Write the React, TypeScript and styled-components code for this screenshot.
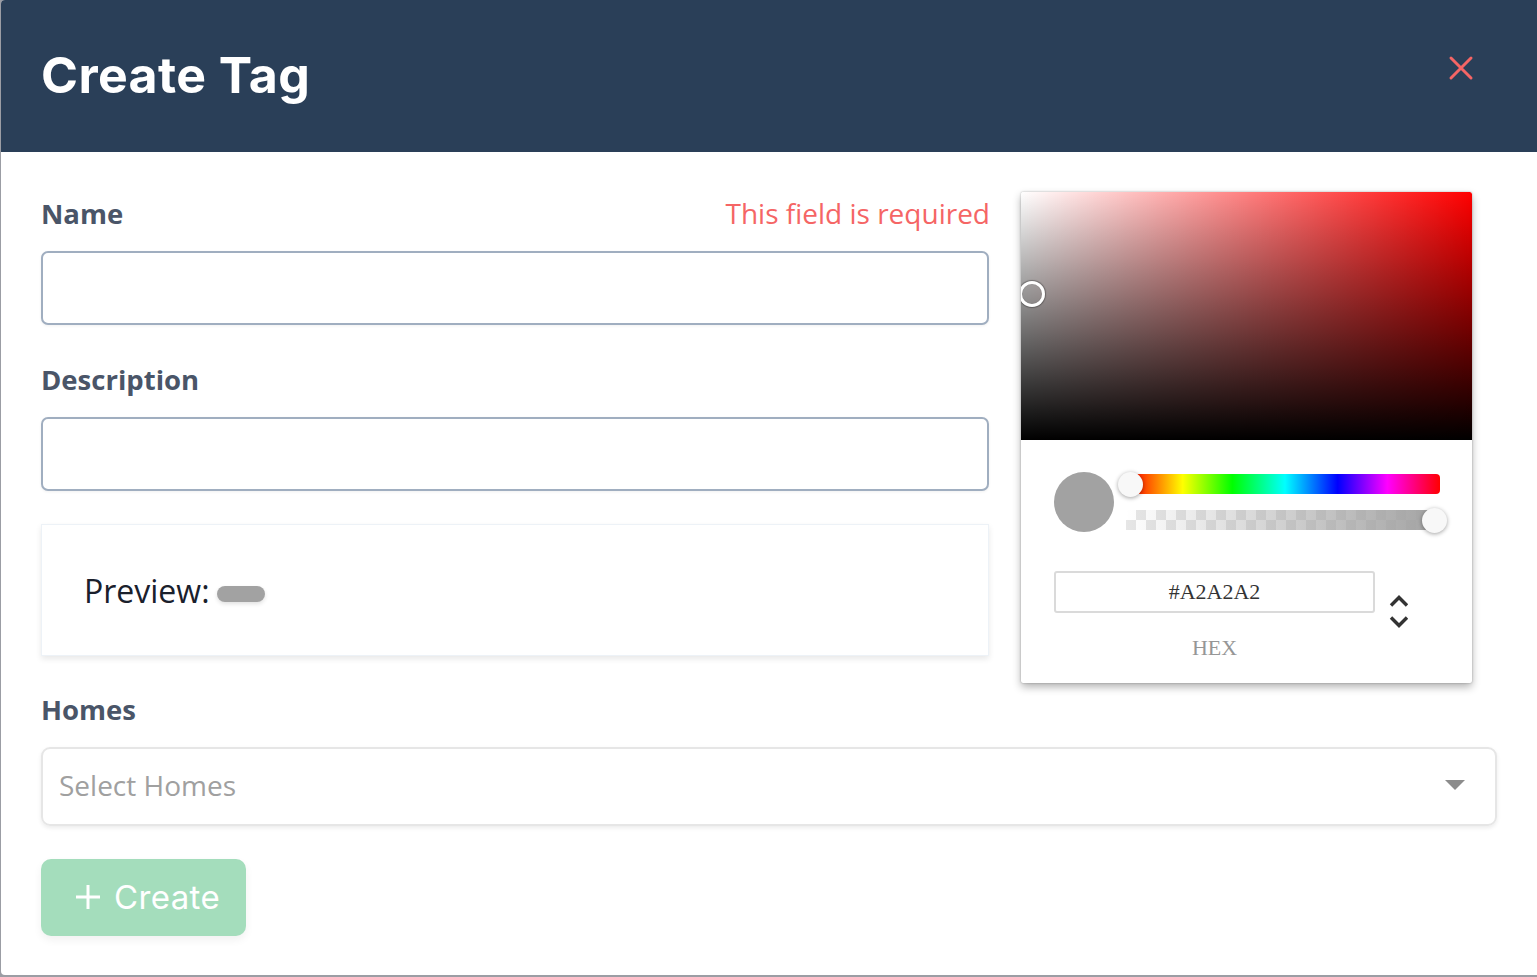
import * as React from "react";
import styled, { createGlobalStyle } from "styled-components";

const GlobalStyle = createGlobalStyle`
  html, body {
    margin: 0;
    padding: 0;
    background: #9b9da4;
  }
  * {
    box-sizing: border-box;
  }
`;

const Page = styled.div`
  width: 1537px;
  height: 977px;
  padding: 0 0 2px 1px;
  overflow: hidden;
`;

const Modal = styled.div`
  height: 975px;
  background: #fff;
  border-radius: 4px 0 0 4px;
  overflow: hidden;
  display: flex;
  flex-direction: column;
`;

const Header = styled.header`
  height: 152px;
  flex: none;
  background: #2a3f58;
  display: flex;
  align-items: center;
  justify-content: space-between;
  padding: 0 61px 2px 40px;
`;

const Title = styled.h1`
  margin: 0;
  color: #fff;
  font-family: Inter, "Open Sans", sans-serif;
  font-weight: 700;
  font-size: 50px;
  letter-spacing: 0.4px;
`;

const CloseButton = styled.button`
  border: none;
  background: none;
  padding: 0;
  width: 30px;
  height: 30px;
  display: flex;
  align-items: center;
  justify-content: center;
  cursor: pointer;
  margin-top: -14px;
`;

const Body = styled.div`
  padding: 39px 40px 40px 40px;
  font-family: "Open Sans", sans-serif;
`;

const TopRow = styled.div`
  display: flex;
  align-items: flex-start;
  gap: 32px;
`;

const FormColumn = styled.div`
  width: 948px;
  display: flex;
  flex-direction: column;
`;

const Field = styled.div<{ $gap?: number }>`
  display: flex;
  flex-direction: column;
  margin-top: ${(p) => p.$gap ?? 0}px;
`;

const LabelRow = styled.div`
  height: 44px;
  display: flex;
  align-items: center;
  justify-content: space-between;
  margin-bottom: 16px;
`;

const Label = styled.label`
  color: #4a5568;
  font-weight: 700;
  font-size: 27.5px;
`;

const ErrorText = styled.span`
  color: #f56565;
  font-size: 28px;
  margin-right: -1px;
`;

const TextInput = styled.input`
  height: 74px;
  width: 100%;
  border: 2px solid #a0aec0;
  border-radius: 7px;
  padding: 0 18px;
  font-family: "Open Sans", sans-serif;
  font-size: 26px;
  outline: none;
  box-shadow: 0 1px 3px rgba(0, 0, 0, 0.06);
`;

const PreviewCard = styled.div`
  margin-top: 33px;
  height: 132px;
  border: 1px solid #edf2f7;
  box-shadow: 0 3px 6px rgba(0, 0, 0, 0.09);
  display: flex;
  align-items: center;
  padding: 0 42px;
  gap: 7px;
`;

const PreviewLabel = styled.span`
  color: #1a202c;
  font-size: 32px;
`;

const TagPill = styled.span<{ $color: string }>`
  width: 48px;
  height: 16px;
  border-radius: 8px;
  background: ${(p) => p.$color};
  box-shadow: 0 2px 4px rgba(0, 0, 0, 0.12);
  margin-top: 8px;
`;

/* color picker */

const Picker = styled.div`
  width: 451px;
  margin-top: 1px;
  background: #fff;
  border-radius: 2px;
  box-shadow: 0 0 2px rgba(0, 0, 0, 0.3), 0 4px 8px rgba(0, 0, 0, 0.3);
  overflow: hidden;
`;

const Saturation = styled.div`
  position: relative;
  height: 248px;
  overflow: hidden;
  border-radius: 2px 2px 0 0;
  background: linear-gradient(to top, #000, rgba(0, 0, 0, 0)),
    linear-gradient(to right, #fff, rgba(255, 255, 255, 0)), hsl(0, 100%, 50%);
`;

const SatPointer = styled.div`
  position: absolute;
  left: -2px;
  top: 89px;
  width: 26px;
  height: 26px;
  border-radius: 50%;
  box-shadow: inset 0 0 0 3px #fff, 0 0 1px 1px rgba(0, 0, 0, 0.3),
    inset 0 0 1px 3px rgba(0, 0, 0, 0.3);
`;

const PickerBody = styled.div`
  padding: 32px 32px 22px 33px;
`;

const ControlsRow = styled.div`
  display: flex;
  align-items: center;
  gap: 12px;
`;

const Swatch = styled.div<{ $color: string }>`
  width: 60px;
  height: 60px;
  border-radius: 50%;
  background: ${(p) => p.$color};
  flex: none;
`;

const Sliders = styled.div`
  flex: 1;
  display: flex;
  flex-direction: column;
  gap: 16px;
`;

const Track = styled.div`
  position: relative;
  height: 20px;
  border-radius: 2px 4px 4px 2px;
`;

const HueTrack = styled(Track)`
  margin-left: 4px;
  background: linear-gradient(
    to right,
    #f00 0%,
    #ff0 17%,
    #0f0 33%,
    #0ff 50%,
    #00f 67%,
    #f0f 83%,
    #f00 100%
  );
`;

const AlphaTrack = styled(Track)`
  background: linear-gradient(to right, rgba(162, 162, 162, 0), #a2a2a2),
    repeating-conic-gradient(#e6e6e6 0% 25%, #fff 0% 50%) 0 0 / 20px 20px;
  border-radius: 0;
`;

const Thumb = styled.div<{ $pos: string }>`
  position: absolute;
  top: 50%;
  left: ${(p) => p.$pos};
  width: 25px;
  height: 25px;
  margin: -12.5px 0 0 -12.5px;
  border-radius: 50%;
  background: #f8f8f8;
  box-shadow: 0 1px 4px rgba(0, 0, 0, 0.37);
`;

const FieldsRow = styled.div`
  display: flex;
  margin-top: 39px;
`;

const HexField = styled.div`
  width: 321px;
  display: flex;
  flex-direction: column;
  align-items: center;
`;

const HexInput = styled.input`
  width: 100%;
  height: 42px;
  border: none;
  border-radius: 3px;
  box-shadow: inset 0 0 0 2px #dadada;
  text-align: center;
  font-family: "Liberation Serif", serif;
  font-size: 22px;
  color: #333;
  outline: none;
`;

const HexLabel = styled.span`
  margin-top: 22px;
  font-family: "Liberation Serif", serif;
  font-size: 22px;
  color: #969696;
  text-transform: uppercase;
`;

const Toggle = styled.div`
  width: 50px;
  display: flex;
  flex-direction: column;
  align-items: center;
  padding-top: 24px;
  gap: 9px;
  margin-left: -1px;
`;

/* homes select */

const HomesField = styled(Field)`
  margin-top: 4px;
`;

const SelectBox = styled.div`
  height: 79px;
  border: 2px solid #e6e6e6;
  border-radius: 9px;
  box-shadow: 0 2px 4px rgba(0, 0, 0, 0.08);
  display: flex;
  align-items: center;
  justify-content: space-between;
  padding: 0 30px 4px 16px;
`;

const Placeholder = styled.span`
  color: #a0a0a0;
  font-size: 28px;
`;

const Caret = styled.span`
  width: 0;
  height: 0;
  border-left: 10px solid transparent;
  border-right: 10px solid transparent;
  border-top: 10px solid #8c8c8c;
  margin-top: 0;
`;

const CreateButton = styled.button`
  margin-top: 33px;
  height: 77px;
  width: 205px;
  border: none;
  border-radius: 10px;
  background: #a4ddbc;
  color: #fff;
  font-family: Inter, sans-serif;
  font-size: 33px;
  letter-spacing: 0.4px;
  display: flex;
  align-items: center;
  justify-content: center;
  gap: 13px;
  padding: 0 0 2px 8px;
  box-shadow: 0 4px 8px rgba(0, 0, 0, 0.06);
`;

function CloseIcon() {
  return (
    <svg width="26" height="26" viewBox="0 0 26 26">
      <path d="M3 3 L23 23 M23 3 L3 23" stroke="#f56565" strokeWidth="3" strokeLinecap="round" />
    </svg>
  );
}

function Chevron({ up }: { up?: boolean }) {
  return (
    <svg width="20" height="12" viewBox="0 0 20 12">
      <path
        d={up ? "M2 10.5 L10 2.5 L18 10.5" : "M2 1.5 L10 9.5 L18 1.5"}
        stroke="#333"
        strokeWidth="3.4"
        fill="none"
        strokeLinejoin="miter"
      />
    </svg>
  );
}

function PlusIcon() {
  return (
    <svg width="26" height="26" viewBox="0 0 26 26">
      <path d="M13 1 V25 M1 13 H25" stroke="#fff" strokeWidth="3" />
    </svg>
  );
}

function ColorPicker({ color }: { color: string }) {
  return (
    <Picker>
      <Saturation>
        <SatPointer />
      </Saturation>
      <PickerBody>
        <ControlsRow>
          <Swatch $color={color} />
          <Sliders>
            <HueTrack>
              <Thumb $pos="0%" />
            </HueTrack>
            <AlphaTrack>
              <Thumb $pos="calc(100% - 6px)" />
            </AlphaTrack>
          </Sliders>
        </ControlsRow>
        <FieldsRow>
          <HexField>
            <HexInput value={color.toUpperCase()} readOnly />
            <HexLabel>hex</HexLabel>
          </HexField>
          <Toggle>
            <Chevron up />
            <Chevron />
          </Toggle>
        </FieldsRow>
      </PickerBody>
    </Picker>
  );
}

export default function App() {
  const color = "#a2a2a2";
  return (
    <Page>
      <GlobalStyle />
      <Modal>
        <Header>
          <Title>Create Tag</Title>
          <CloseButton aria-label="Close">
            <CloseIcon />
          </CloseButton>
        </Header>
        <Body>
          <TopRow>
            <FormColumn>
              <Field>
                <LabelRow>
                  <Label>Name</Label>
                  <ErrorText>This field is required</ErrorText>
                </LabelRow>
                <TextInput />
              </Field>
              <Field $gap={32}>
                <LabelRow>
                  <Label>Description</Label>
                </LabelRow>
                <TextInput />
              </Field>
              <PreviewCard>
                <PreviewLabel>Preview:</PreviewLabel>
                <TagPill $color={color} />
              </PreviewCard>
            </FormColumn>
            <ColorPicker color={color} />
          </TopRow>
          <HomesField>
            <LabelRow>
              <Label>Homes</Label>
            </LabelRow>
            <SelectBox>
              <Placeholder>Select Homes</Placeholder>
              <Caret />
            </SelectBox>
          </HomesField>
          <CreateButton>
            <PlusIcon />
            Create
          </CreateButton>
        </Body>
      </Modal>
    </Page>
  );
}
